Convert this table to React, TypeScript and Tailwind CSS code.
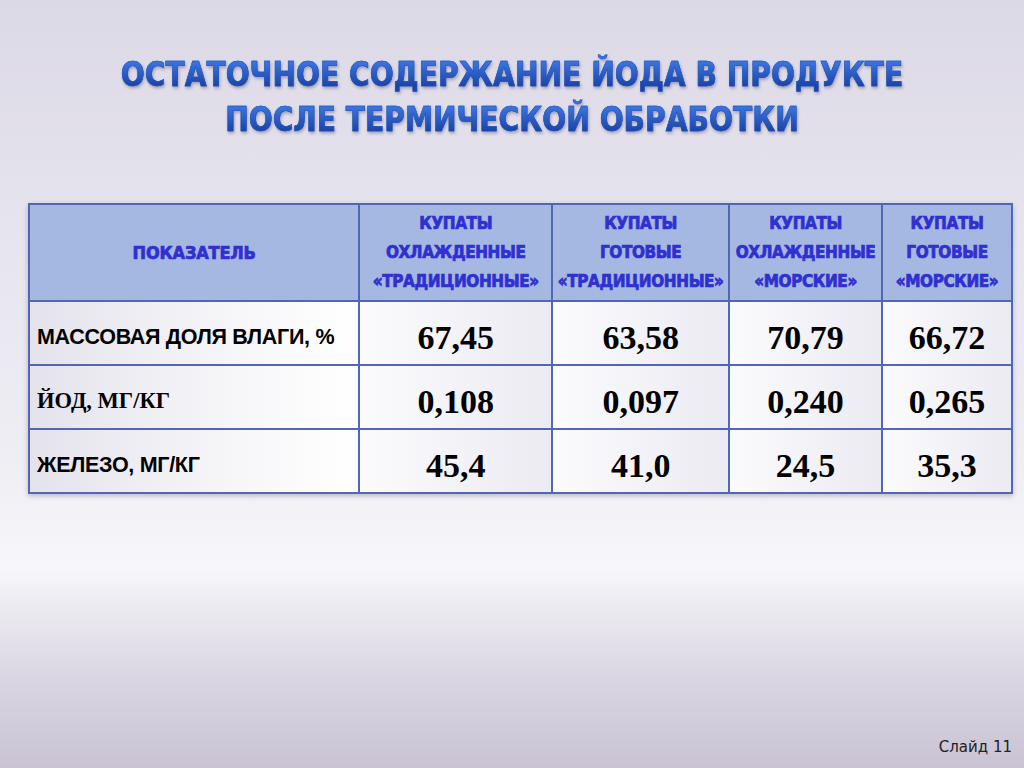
export default function App() {
  const cols = [
    ["КУПАТЫ", "ОХЛАЖДЕННЫЕ", "«ТРАДИЦИОННЫЕ»"],
    ["КУПАТЫ", "ГОТОВЫЕ", "«ТРАДИЦИОННЫЕ»"],
    ["КУПАТЫ", "ОХЛАЖДЕННЫЕ", "«МОРСКИЕ»"],
    ["КУПАТЫ", "ГОТОВЫЕ", "«МОРСКИЕ»"],
  ]
  const rows = [
    { label: "МАССОВАЯ ДОЛЯ ВЛАГИ, %", serif: false, values: ["67,45", "63,58", "70,79", "66,72"] },
    { label: "ЙОД, МГ/КГ", serif: true, values: ["0,108", "0,097", "0,240", "0,265"] },
    { label: "ЖЕЛЕЗО, МГ/КГ", serif: false, values: ["45,4", "41,0", "24,5", "35,3"] },
  ]
  const widths = ["w-[331px]", "w-[193px]", "w-[177px]", "w-[153px]", "w-[130px]"]

  return (
    <div className="w-[1024px] h-[768px] overflow-hidden flex flex-col bg-[linear-gradient(180deg,#dcd9e6_0%,#e6e4ee_30%,#efeef4_60%,#f7f6fa_74%,#dad6e2_88%,#c9c3d4_100%)] font-['Liberation_Sans',sans-serif]">
      <div className="pt-[52px] text-center text-[33.5px] leading-[45px] font-bold font-['DejaVu_Sans_Condensed','DejaVu_Sans',sans-serif] [filter:drop-shadow(1px_2px_1.5px_rgba(40,40,90,0.35))] [transform:scaleX(0.935)]">
        <div>
          <span className="bg-[linear-gradient(180deg,#3a72dc_20%,#1a44a8_80%)] bg-clip-text text-transparent [-webkit-text-stroke:0.5px_#1d4fb9]">
            ОСТАТОЧНОЕ СОДЕРЖАНИЕ ЙОДА В ПРОДУКТЕ
          </span>
        </div>
        <div>
          <span className="bg-[linear-gradient(180deg,#3a72dc_20%,#1a44a8_80%)] bg-clip-text text-transparent [-webkit-text-stroke:0.5px_#1d4fb9]">
            ПОСЛЕ ТЕРМИЧЕСКОЙ ОБРАБОТКИ
          </span>
        </div>
      </div>

      <div className="mt-[61px] ml-[28px] w-[985px]">
        <table className="border-collapse border-2 border-[#5068b4] shadow-[0_2px_5px_rgba(60,60,100,0.3)]">
          <thead>
            <tr className="h-[97px] bg-[#a5b8e1]">
              <th className={`${widths[0]} border-2 border-[#5068b4] text-[#3030d0] text-[18px] font-bold font-['DejaVu_Sans_Condensed',sans-serif] tracking-[-0.2px] [-webkit-text-stroke:0.7px_#3030d0]`}>
                ПОКАЗАТЕЛЬ
              </th>
              {cols.map((c, i) => (
                <th
                  key={i}
                  className={`${widths[i + 1]} border-2 border-[#5068b4] text-[#3030d0] text-[17px] leading-[29px] font-bold font-['DejaVu_Sans_Condensed',sans-serif] tracking-[-0.4px] [-webkit-text-stroke:0.7px_#3030d0] whitespace-nowrap align-middle`}
                >
                  {c.map((l, j) => (
                    <div key={j}>{l}</div>
                  ))}
                </th>
              ))}
            </tr>
          </thead>
          <tbody>
            {rows.map((r, i) => (
              <tr key={i} className="h-[64px]">
                <td
                  className={`border-2 border-[#5068b4] pl-[7px] pt-[8px] bg-[linear-gradient(90deg,#e4e3ec,#f6f6f9_60%,#ffffff)] text-black font-bold ${
                    r.serif
                      ? "font-['Liberation_Serif',serif] text-[22.5px]"
                      : "font-['Liberation_Sans_Narrow','Liberation_Sans',sans-serif] text-[21.5px] tracking-[-0.3px]"
                  }`}
                >
                  {r.label}
                </td>
                {r.values.map((v, j) => (
                  <td
                    key={j}
                    className="border-2 border-[#5068b4] text-center pt-[8px] bg-[linear-gradient(90deg,#fbfbfd,#eceaf2)] text-black font-bold font-['Liberation_Serif',serif] text-[34px]"
                  >
                    {v}
                  </td>
                ))}
              </tr>
            ))}
          </tbody>
        </table>
      </div>

      <div className="mt-auto mb-[10px] mr-[12px] self-end text-[15px] text-[#222] font-['DejaVu_Sans',sans-serif]">
        Слайд 11
      </div>
    </div>
  )
}
